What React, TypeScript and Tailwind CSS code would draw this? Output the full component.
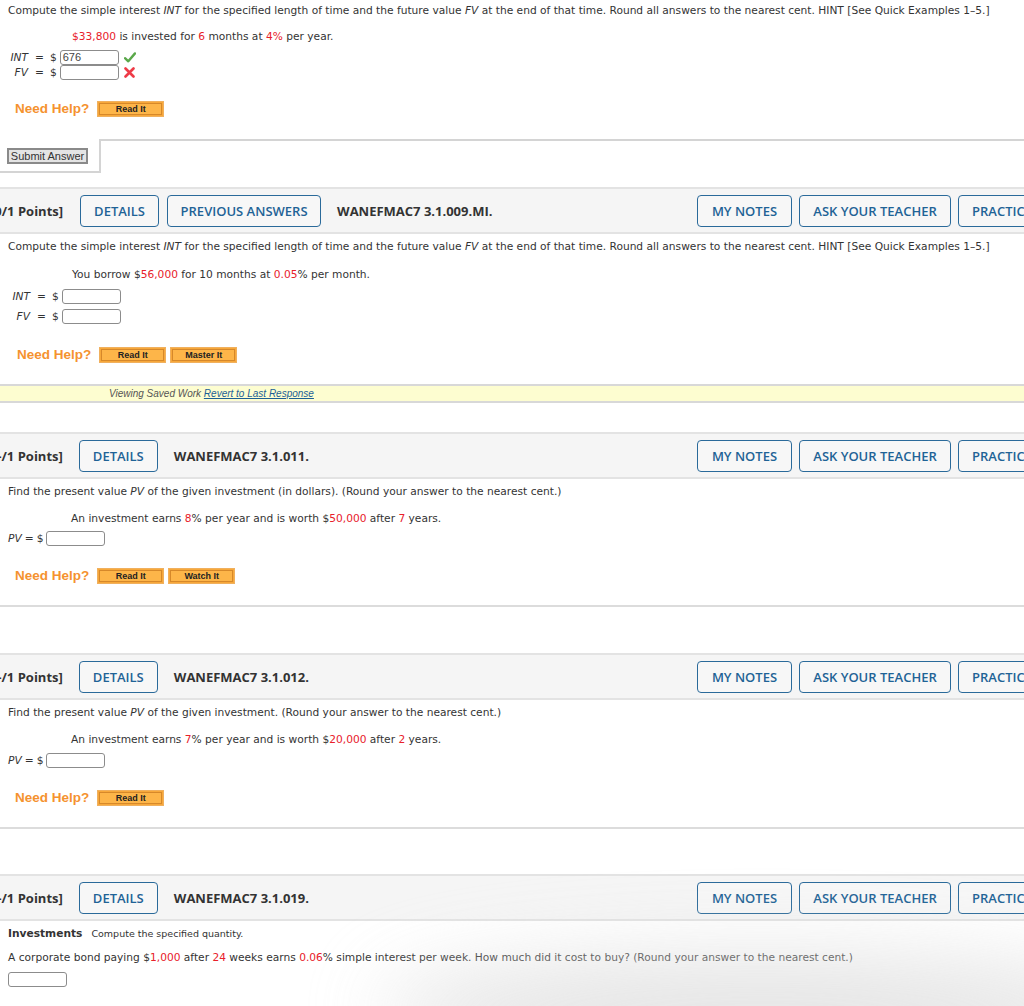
import type { ReactNode } from 'react';

const BODY = "font-['DejaVu_Sans',Verdana,sans-serif]";
const ARIAL = "font-['Liberation_Sans',Arial,sans-serif]";
const OPEN = "font-['Open_Sans',sans-serif]";

function Red({ children }: { children: ReactNode }) {
  return <span className="text-[#e8202a]">{children}</span>;
}

function AnswerBox({ value }: { value?: string }) {
  return (
    <span
      className={`inline-flex h-[15px] w-[59px] items-center rounded-[3px] border border-[#8c8c8c] bg-white px-[2px] ${ARIAL} text-[11px] leading-none text-[#444]`}
    >
      {value}
    </span>
  );
}

function HelpButton({ label }: { label: string }) {
  return (
    <span className="flex h-[16px] w-[67px] items-center justify-center border border-[#f0b05e] bg-[#f7a83a] p-[1px]">
      <span
        className={`flex h-full w-full items-center justify-center border border-[#d6882a] bg-[#fdb549] ${ARIAL} text-[9px] font-bold leading-none text-[#222]`}
      >
        {label}
      </span>
    </span>
  );
}

function NeedHelp({ buttons }: { buttons: string[] }) {
  return (
    <div className="flex h-[16px] items-center">
      <span className={`${ARIAL} text-[13.5px] font-bold text-[#f5922f]`}>Need Help?</span>
      <div className="ml-[8px] flex gap-[4px]">
        {buttons.map((b) => (
          <HelpButton key={b} label={b} />
        ))}
      </div>
    </div>
  );
}

function HeaderButton({ label, width, left }: { label: string; width: string; left?: boolean }) {
  return (
    <span
      className={`flex h-[32px] ${width} shrink-0 items-center ${left ? 'justify-start pl-[13px]' : 'justify-center'} rounded-[4px] border-[1.5px] border-[#2a6a9a] bg-[#f7f7f7] text-[13px] font-semibold text-[#1f6396]`}
    >
      {label}
    </span>
  );
}

function QuestionHeader({
  points,
  code,
  previous,
}: {
  points: string;
  code: string;
  previous?: boolean;
}) {
  return (
    <div
      className={`flex h-[47px] w-[1138px] items-center border-y-2 border-[#e3e3e3] bg-[#f5f5f5] ${OPEN}`}
    >
      <span className={`${points === '0' ? 'ml-[-10px]' : 'ml-[-7px]'} shrink-0 text-[13px] font-bold text-[#333]`}>
        [{points}/1 Points]
      </span>
      <div className={`${points === '0' ? 'ml-[17px]' : 'ml-[16px]'} flex gap-[8px]`}>
        <HeaderButton label="DETAILS" width="w-[79px]" />
        {previous && <HeaderButton label="PREVIOUS ANSWERS" width="w-[154px]" />}
      </div>
      <span className="ml-[16px] text-[13px] font-bold text-[#333]">{code}</span>
      <div className="ml-auto flex gap-[7px]">
        <HeaderButton label="MY NOTES" width="w-[95px]" />
        <HeaderButton label="ASK YOUR TEACHER" width="w-[152px]" />
        <HeaderButton label="PRACTICE ANOTHER" width="w-[180px]" left />
      </div>
    </div>
  );
}

function CheckIcon() {
  return (
    <svg width="12" height="11" viewBox="0 0 12 11" className="ml-[5px]">
      <path d="M1 6.2 L4.3 9.3 L11 1.4" fill="none" stroke="#5aa84a" strokeWidth="2.4" strokeLinecap="round" strokeLinejoin="round" />
    </svg>
  );
}

function CrossIcon() {
  return (
    <svg width="11" height="11" viewBox="0 0 11 11" className="ml-[5px]">
      <path d="M1.5 1.5 L9.5 9.5 M9.5 1.5 L1.5 9.5" fill="none" stroke="#ee3b47" strokeWidth="2.6" strokeLinecap="round" />
    </svg>
  );
}

function Row({ label, children }: { label: string; children: ReactNode }) {
  return (
    <div className="flex h-[15px] items-center">
      <span className="w-[20px] text-right italic">{label}</span>
      <span className="ml-[7px]">=</span>
      <span className="ml-[6px] mr-[3px]">$</span>
      {children}
    </div>
  );
}

function PvRow() {
  return (
    <div className="flex h-[15px] items-center">
      <span className="italic">PV</span>
      <span className="ml-[3px]">=</span>
      <span className="ml-[3px] mr-[3px]">$</span>
      <AnswerBox />
    </div>
  );
}

export default function App() {
  return (
    <div className={`relative h-[1006px] w-[1024px] overflow-hidden bg-white text-[10.65px] leading-[14px] text-[#333] ${BODY}`}>
      {/* question 8, partially scrolled */}
      <div className="mt-[4px] whitespace-nowrap pl-[8px]">
        Compute the simple interest <i>INT</i> for the specified length of time and the future value <i>FV</i> at the
        end of that time. Round all answers to the nearest cent. HINT [See Quick Examples 1–5.]
      </div>
      <div className="mt-[12px] pl-[72px]">
        <Red>$33,800</Red> is invested for <Red>6</Red> months at <Red>4%</Red> per year.
      </div>
      <div className="mt-[6px] pl-[8px]">
        <Row label="INT">
          <AnswerBox value="676" />
          <CheckIcon />
        </Row>
        <Row label="FV">
          <AnswerBox />
          <CrossIcon />
        </Row>
      </div>
      <div className="mt-[21px] pl-[15px]">
        <NeedHelp buttons={['Read It']} />
      </div>
      <div className="mt-[22px] flex">
        <div className="h-[34px] w-[101px] border-r-2 border-b-2 border-[#d4d4d4] pl-[7px] pt-[9px]">
          <span className={`flex h-[16px] w-[81px] items-center justify-center border-2 border-[#8a8a8a] bg-[#e4e4e4] ${ARIAL} text-[11px] leading-none text-[#333]`}>
            Submit Answer
          </span>
        </div>
        <div className="flex-1 border-t-2 border-[#d4d4d4]" />
      </div>

      {/* question 9 */}
      <div className="mt-[14px]">
        <QuestionHeader points="0" code="WANEFMAC7 3.1.009.MI." previous />
      </div>
      <div className="mt-[6px] whitespace-nowrap pl-[8px]">
        Compute the simple interest <i>INT</i> for the specified length of time and the future value <i>FV</i> at the
        end of that time. Round all answers to the nearest cent. HINT [See Quick Examples 1–5.]
      </div>
      <div className="mt-[14px] pl-[72px]">
        You borrow $<Red>56,000</Red> for 10 months at <Red>0.05</Red>% per month.
      </div>
      <div className="mt-[7px] flex flex-col gap-[5px] pl-[10px]">
        <Row label="INT">
          <AnswerBox />
        </Row>
        <Row label="FV">
          <AnswerBox />
        </Row>
      </div>
      <div className="mt-[23px] pl-[17px]">
        <NeedHelp buttons={['Read It', 'Master It']} />
      </div>
      <div className={`mt-[21px] flex h-[19px] items-center border-y-2 border-[#d8d8d8] bg-[#fdfdd0] pl-[109px] ${ARIAL} text-[10px] italic text-[#555]`}>
        Viewing Saved Work&nbsp;
        <span className="text-[#1c5f96] underline">Revert to Last Response</span>
      </div>

      {/* question 10 */}
      <div className="mt-[29px]">
        <QuestionHeader points="-" code="WANEFMAC7 3.1.011." />
      </div>
      <div className="mt-[6px] pl-[8px]">
        Find the present value <i>PV</i> of the given investment (in dollars). (Round your answer to the nearest cent.)
      </div>
      <div className="mt-[13px] pl-[71px]">
        An investment earns <Red>8</Red>% per year and is worth $<Red>50,000</Red> after <Red>7</Red> years.
      </div>
      <div className="mt-[5px] pl-[8px]">
        <PvRow />
      </div>
      <div className="mt-[22px] pl-[15px]">
        <NeedHelp buttons={['Read It', 'Watch It']} />
      </div>
      <div className="mt-[21px] h-[2px] bg-[#dcdcdc]" />

      {/* question 11 */}
      <div className="mt-[46px]">
        <QuestionHeader points="-" code="WANEFMAC7 3.1.012." />
      </div>
      <div className="mt-[6px] pl-[8px]">
        Find the present value <i>PV</i> of the given investment. (Round your answer to the nearest cent.)
      </div>
      <div className="mt-[13px] pl-[71px]">
        An investment earns <Red>7</Red>% per year and is worth $<Red>20,000</Red> after <Red>2</Red> years.
      </div>
      <div className="mt-[6px] pl-[8px]">
        <PvRow />
      </div>
      <div className="mt-[22px] pl-[15px]">
        <NeedHelp buttons={['Read It']} />
      </div>
      <div className="mt-[21px] h-[2px] bg-[#dcdcdc]" />

      {/* question 12 */}
      <div className="mt-[45px]">
        <QuestionHeader points="-" code="WANEFMAC7 3.1.019." />
      </div>
      <div className="mt-[6px] flex items-baseline pl-[8px]">
        <span className="font-bold">Investments</span>
        <span className="ml-[9px] text-[9.5px]">Compute the specified quantity.</span>
      </div>
      <div className="mt-[10px] whitespace-nowrap pl-[8px]">
        A corporate bond paying $<Red>1,000</Red> after <Red>24</Red> weeks earns <Red>0.06</Red>% simple interest per
        week. How much did it cost to buy? (Round your answer to the nearest cent.)
      </div>
      <div className="mt-[7px] pl-[8px]">
        <AnswerBox />
      </div>

      {/* soft shadow at the bottom edge */}
      <div className="pointer-events-none absolute bottom-[-60px] left-[380px] right-[-120px] h-[110px] rounded-[50%] bg-[#d9d9d9] opacity-70 blur-2xl" />
    </div>
  );
}
